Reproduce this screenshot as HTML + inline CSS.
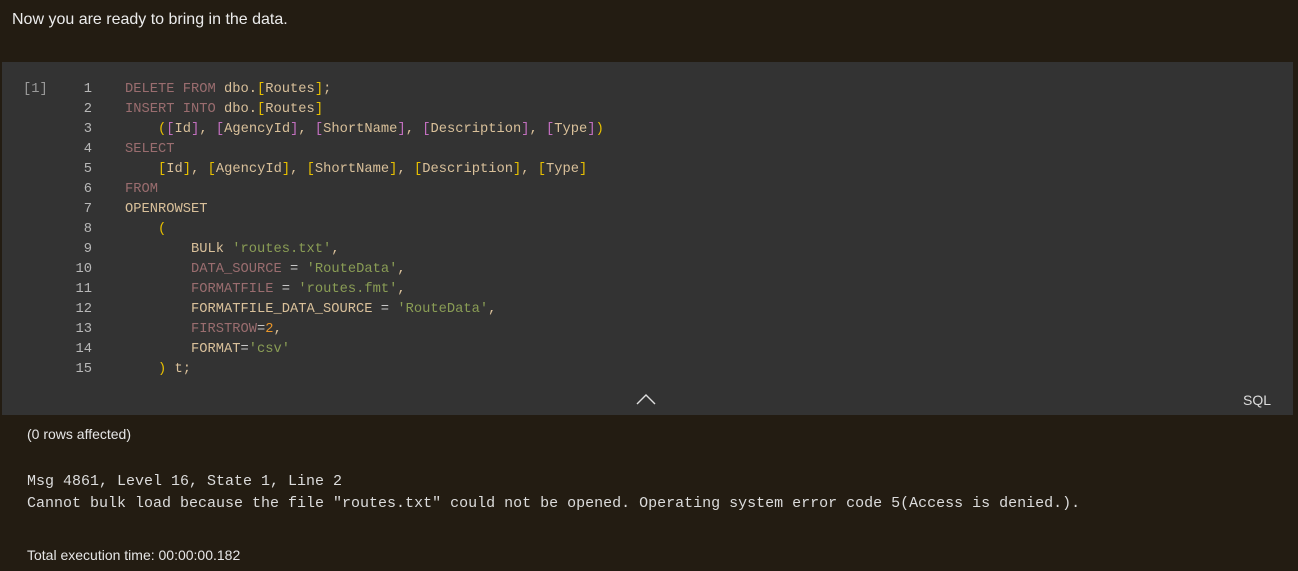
<!DOCTYPE html>
<html><head><meta charset="utf-8"><style>
body{margin:0;width:1298px;height:571px;background:#231c12;position:relative;overflow:hidden;font-family:"Liberation Sans",sans-serif;}
.t{position:absolute;left:12px;top:11px;color:#ececec;font-size:16px;}
.cb{position:absolute;left:2px;top:62px;width:1291px;height:353px;background:#333333;}
.code{position:absolute;top:80px;font-family:"Liberation Mono",monospace;font-size:13.75px;line-height:20px;white-space:pre;}
.ln{left:60px;width:32px;text-align:right;color:#b8b8b8;}
.src{left:125px;color:#d9c09a;}
.k{color:#9a6d6f}.b{color:#e8c000}.p{color:#c36fc0}.s{color:#8a9d55}.n{color:#e8962a}.o{color:#c8c8c8}
.out{position:absolute;left:27px;color:#e6e6e6;font-size:14px;}
.mono{position:absolute;left:27px;font-family:"Liberation Mono",monospace;font-size:15px;color:#dcdcdc;white-space:pre;}
</style></head><body>
<div class="t">Now you are ready to bring in the data.</div>
<div class="cb"></div>
<div style="position:absolute;left:23px;top:80px;font-family:'Liberation Mono',monospace;font-size:13.75px;line-height:20px;color:#9a9a9a">[1]</div>
<div class="code ln">1
2
3
4
5
6
7
8
9
10
11
12
13
14
15</div>
<div class="code src"><span class="k">DELETE FROM</span> dbo.<span class="b">[</span>Routes<span class="b">]</span>;
<span class="k">INSERT INTO</span> dbo.<span class="b">[</span>Routes<span class="b">]</span>
    <span class="b">(</span><span class="p">[</span>Id<span class="p">]</span>, <span class="p">[</span>AgencyId<span class="p">]</span>, <span class="p">[</span>ShortName<span class="p">]</span>, <span class="p">[</span>Description<span class="p">]</span>, <span class="p">[</span>Type<span class="p">]</span><span class="b">)</span>
<span class="k">SELECT</span>
    <span class="b">[</span>Id<span class="b">]</span>, <span class="b">[</span>AgencyId<span class="b">]</span>, <span class="b">[</span>ShortName<span class="b">]</span>, <span class="b">[</span>Description<span class="b">]</span>, <span class="b">[</span>Type<span class="b">]</span>
<span class="k">FROM</span>
OPENROWSET
    <span class="b">(</span>
        BULk <span class="s">'routes.txt'</span>,
        <span class="k">DATA_SOURCE</span> <span class="o">=</span> <span class="s">'RouteData'</span>,
        <span class="k">FORMATFILE</span> <span class="o">=</span> <span class="s">'routes.fmt'</span>,
        FORMATFILE_DATA_SOURCE <span class="o">=</span> <span class="s">'RouteData'</span>,
        <span class="k">FIRSTROW</span><span class="o">=</span><span class="n">2</span>,
        FORMAT<span class="o">=</span><span class="s">'csv'</span>
    <span class="b">)</span> t;</div>
<svg style="position:absolute;left:636px;top:393px" width="20" height="12"><path d="M1 11 L10 2 L19 11" fill="none" stroke="#e0e0e0" stroke-width="1.4"/></svg>
<div style="position:absolute;left:1243px;top:392px;color:#dcdcdc;font-size:14px">SQL</div>
<div class="out" style="top:426px">(0 rows affected)</div>
<div class="mono" style="top:473px">Msg 4861, Level 16, State 1, Line 2</div>
<div class="mono" style="top:495px">Cannot bulk load because the file "routes.txt" could not be opened. Operating system error code 5(Access is denied.).</div>
<div class="out" style="top:547px">Total execution time: 00:00:00.182</div>
</body></html>
